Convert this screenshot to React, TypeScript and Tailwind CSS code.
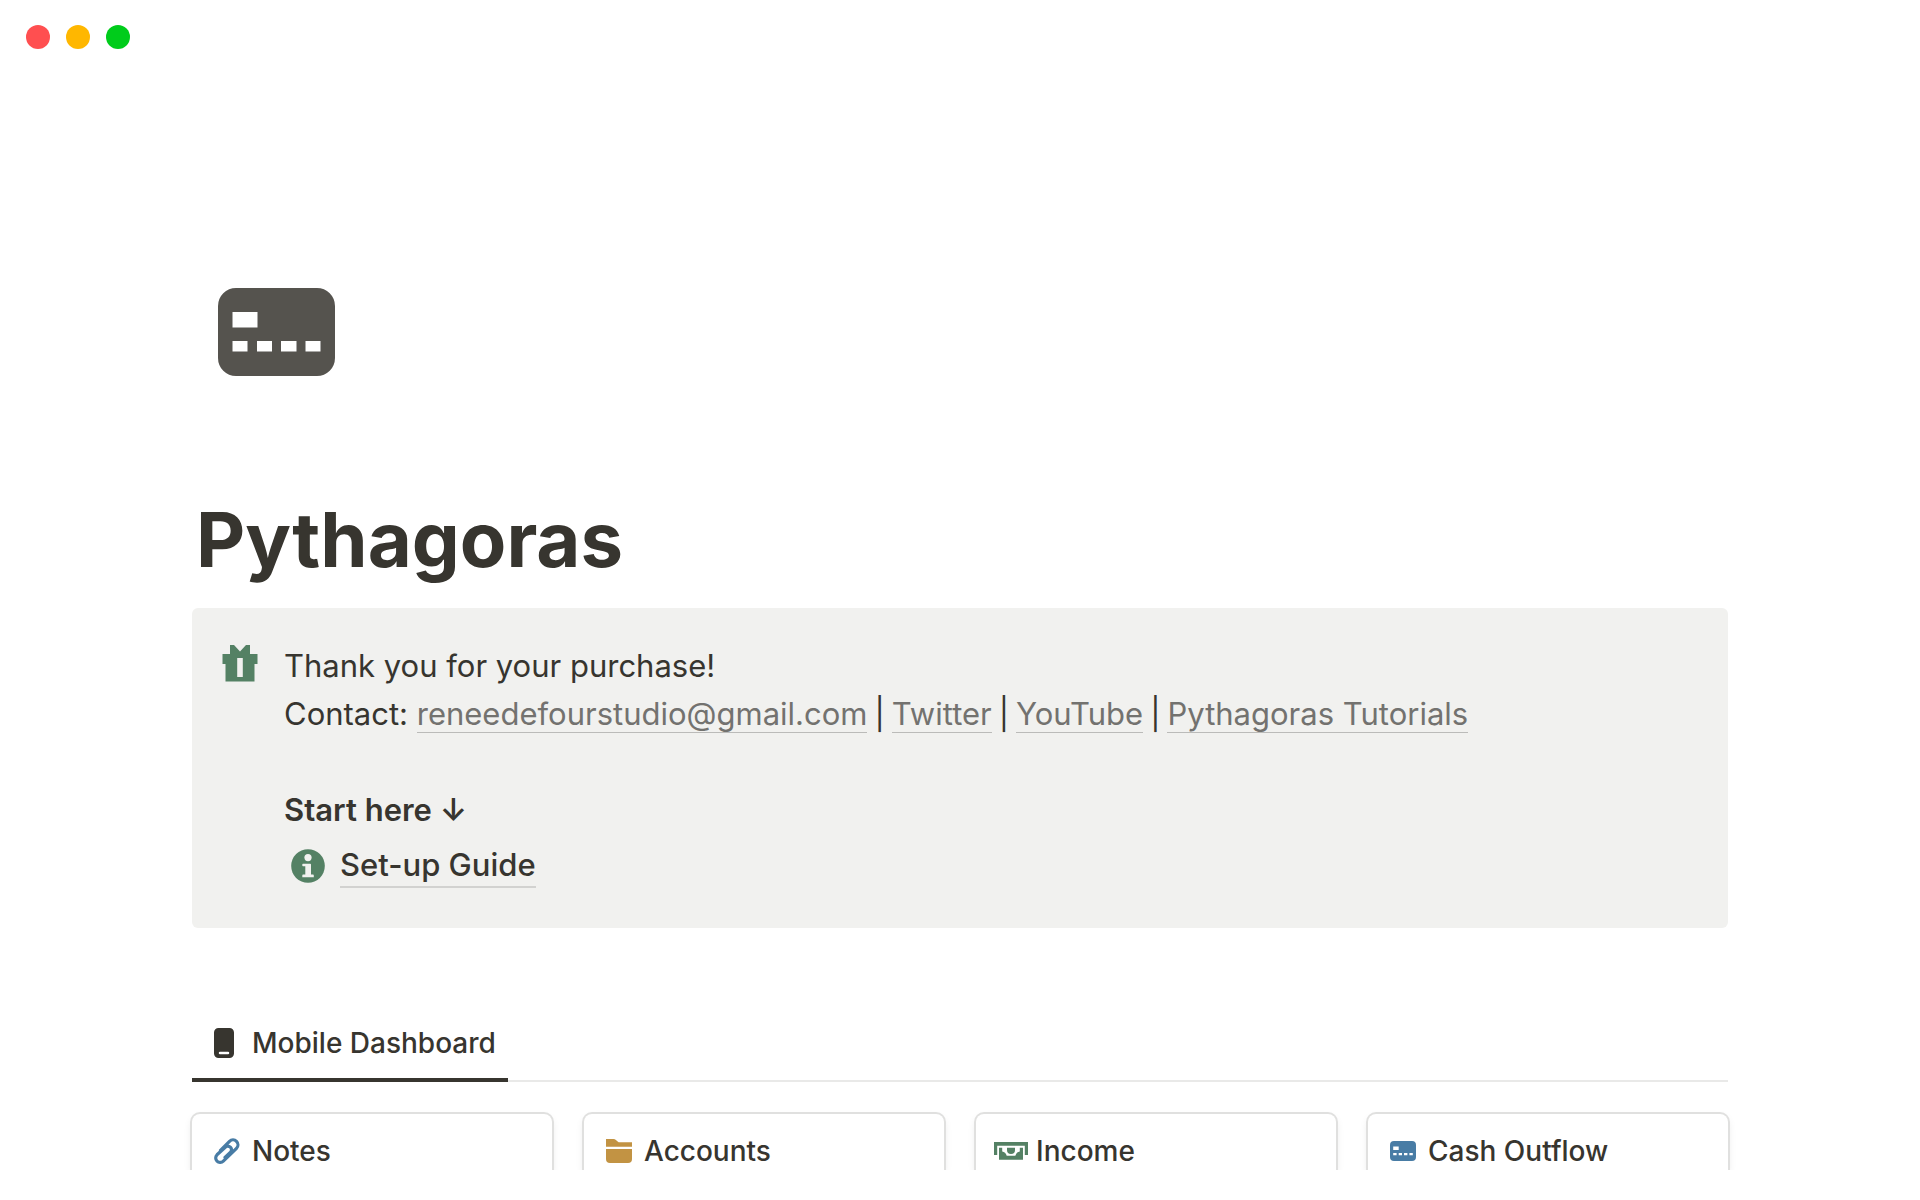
import type { ReactNode } from 'react';

interface IconProps {
  className?: string;
}

function CreditCardIcon({ className }: IconProps) {
  return (
    <svg viewBox="0 0 117 88" className={className} fill="currentColor" aria-hidden="true">
      <path
        fillRule="evenodd"
        d="M18 0H99A18 18 0 0 1 117 18V70A18 18 0 0 1 99 88H18A18 18 0 0 1 0 70V18A18 18 0 0 1 18 0ZM14.500 24V39.500H39.500V24ZM14.500 53V63.500H29.500V53ZM39 53V63.500H54V53ZM63 53V63.500H78.500V53ZM87.500 53V63.500H102.500V53Z"
      />
    </svg>
  );
}

function SmallCardIcon({ className }: IconProps) {
  return (
    <svg viewBox="0 0 26 20" className={className} fill="currentColor" aria-hidden="true">
      <path
        fillRule="evenodd"
        d="M4 0H22A4 4 0 0 1 26 4V16A4 4 0 0 1 22 20H4A4 4 0 0 1 0 16V4A4 4 0 0 1 4 0ZM3.200 5.500V9H8.700V5.500ZM3.200 12V14.300H6.600V12ZM8.700 12V14.300H12V12ZM14 12V14.300H17.400V12ZM19.400 12V14.300H22.800V12Z"
      />
    </svg>
  );
}

function GiftIcon({ className }: IconProps) {
  return (
    <svg viewBox="0 0 36 37" className={className} fill="currentColor" aria-hidden="true">
      <path
        fillRule="evenodd"
        d="M8 0H12L18 6.500L24 0H28V9H35.500V19H32.500V36.500H3.500V19H0.500V9H8ZM15.200 13V32H20.800V13Z"
      />
    </svg>
  );
}

function InfoIcon({ className }: IconProps) {
  return (
    <svg viewBox="0 0 34 34" className={className} aria-hidden="true">
      <circle cx="17" cy="17" r="16.800" fill="currentColor" />
      <circle cx="17" cy="8.600" r="3.600" fill="#f1f1ef" />
      <path
        d="M12 14.700H19.200Q20 14.700 20 15.500V25.600H22Q22.800 25.600 22.800 26.400V28.200H11.300V26.400Q11.300 25.600 12.100 25.600H14.300V17.300H12Q11.300 17.300 11.300 16.500V15.400Q11.300 14.700 12 14.700Z"
        fill="#f1f1ef"
      />
    </svg>
  );
}

function PhoneIcon({ className }: IconProps) {
  return (
    <svg viewBox="0 0 20 30" className={className} fill="currentColor" aria-hidden="true">
      <path
        fillRule="evenodd"
        d="M4.500 0H15.500A4.500 4.500 0 0 1 20 4.500V25.500A4.500 4.500 0 0 1 15.500 30H4.500A4.500 4.500 0 0 1 0 25.500V4.500A4.500 4.500 0 0 1 4.500 0ZM6 23.700A1.200 1.200 0 0 0 6 26.200H14A1.200 1.200 0 0 0 14 23.700Z"
      />
    </svg>
  );
}

function PaperclipIcon({ className }: IconProps) {
  return (
    <svg
      viewBox="0 0 26 26"
      className={className}
      fill="none"
      stroke="currentColor"
      strokeWidth="3.200"
      strokeLinecap="round"
      strokeLinejoin="round"
      aria-hidden="true"
    >
      <path d="M6.500 12.300L15.500 3.300A4.800 4.800 0 0 1 22.500 10.300L9.300 23.100A4.400 4.400 0 0 1 3 16.800L11.800 8.800A3.600 3.600 0 0 1 16.800 13.800L11 19.300" />
    </svg>
  );
}

function FolderIcon({ className }: IconProps) {
  return (
    <svg viewBox="0 0 26 24" className={className} fill="currentColor" aria-hidden="true">
      <path d="M0 0H7.500Q8.900 0 9.900 0.900L12 2.700Q12.600 3.200 13.500 3.200H26V7.700H0Z" />
      <path d="M0 10H26V20A4 4 0 0 1 22 24H4A4 4 0 0 1 0 20Z" />
    </svg>
  );
}

function MoneyIcon({ className }: IconProps) {
  return (
    <svg viewBox="0 0 34 18" className={className} fill="currentColor" aria-hidden="true">
      <path d="M0 0H34V13H30.800V3.700H3.200V13H0Z" />
      <path d="M5 5.800H8.200V9.500Q11.500 9.800 12.700 13.800H21.300Q22.500 9.800 25.800 9.500V5.800H29V17.800H5Z" />
      <path d="M13 5.800H21V8A4 4 0 0 1 13 8Z" />
    </svg>
  );
}

interface TextLinkProps {
  href: string;
  children: ReactNode;
}

function TextLink({ href, children }: TextLinkProps) {
  return (
    <a href={href} className="border-b border-[#bbbbb9] text-[#73726f]">
      {children}
    </a>
  );
}

function Separator() {
  return <span className="mx-[7px]">|</span>;
}

const cards = [
  { title: 'Notes', icon: <PaperclipIcon className="h-[26px] w-[26px] text-[#487ca5]" /> },
  { title: 'Accounts', icon: <FolderIcon className="h-6 w-[26px] text-[#c29343]" /> },
  { title: 'Income', icon: <MoneyIcon className="h-[18px] w-[34px] text-[#548164]" /> },
  { title: 'Cash Outflow', icon: <SmallCardIcon className="h-5 w-[26px] text-[#487ca5]" /> },
];

export default function App() {
  return (
    <div className="min-h-screen bg-white pb-[30px] font-['Inter',sans-serif] text-[#37352f]">
      <header className="flex gap-4 px-[26px] pt-[25px]">
        <button type="button" aria-label="Close" className="h-6 w-6 rounded-full bg-[#ff4f50]" />
        <button type="button" aria-label="Minimize" className="h-6 w-6 rounded-full bg-[#ffb700]" />
        <button type="button" aria-label="Zoom" className="h-6 w-6 rounded-full bg-[#00cc1b]" />
      </header>

      <main className="overflow-hidden px-[10%] pt-[239px]">
        <CreditCardIcon className="ml-[26px] h-[88px] w-[117px] text-[#55534e]" />

        <h1 className="mt-[115px] pl-1 text-[76px] leading-[96px] font-bold">Pythagoras</h1>

        <section className="mt-[21px] flex gap-6 rounded-md bg-[#f1f1ef] px-[30px] pt-[34px] pb-10 text-[31px] leading-[48px]">
          <GiftIcon className="mt-[3px] h-[37px] w-9 shrink-0 text-[#548164]" />
          <div className="pl-0.5">
            <p>Thank you for your purchase!</p>
            <p>
              Contact: <TextLink href="mailto:reneedefourstudio@gmail.com">reneedefourstudio@gmail.com</TextLink>
              <Separator />
              <TextLink href="#twitter">Twitter</TextLink>
              <Separator />
              <TextLink href="#youtube">YouTube</TextLink>
              <Separator />
              <TextLink href="#tutorials">Pythagoras Tutorials</TextLink>
            </p>
            <p className="mt-12 font-semibold">Start here ↓</p>
            <a href="#guide" className="mt-2.5 flex items-center gap-[15px] pl-[7px] font-medium">
              <InfoIcon className="h-[34px] w-[34px] text-[#548164]" />
              <span className="border-b-2 border-[#d2d2d0] leading-[42px]">Set-up Guide</span>
            </a>
          </div>
        </section>

        <nav className="mt-[82px] flex border-b-2 border-[#e9e9e8] text-[28px] leading-[42px] font-medium">
          <a
            href="#mobile"
            aria-current="page"
            className="-mb-0.5 flex items-center gap-[18px] border-b-4 border-[#37352f] pt-3 pr-3 pb-3.5 pl-[22px]"
          >
            <PhoneIcon className="h-[30px] w-5" />
            Mobile Dashboard
          </a>
        </nav>

        <div className="grid grid-cols-4 gap-8 pt-8">
          {cards.map((card) => (
            <a
              key={card.title}
              href="#card"
              className="flex h-14 items-end rounded-t-lg text-[28px] leading-[38px] font-medium shadow-[0_0_0_2px_#e0e0df,0_4px_8px_rgba(15,15,15,0.1)]"
            >
              <span className="flex items-center pl-4">
                <span className="mr-1.5 flex w-[38px] justify-center">{card.icon}</span>
                {card.title}
              </span>
            </a>
          ))}
        </div>
      </main>
    </div>
  );
}
